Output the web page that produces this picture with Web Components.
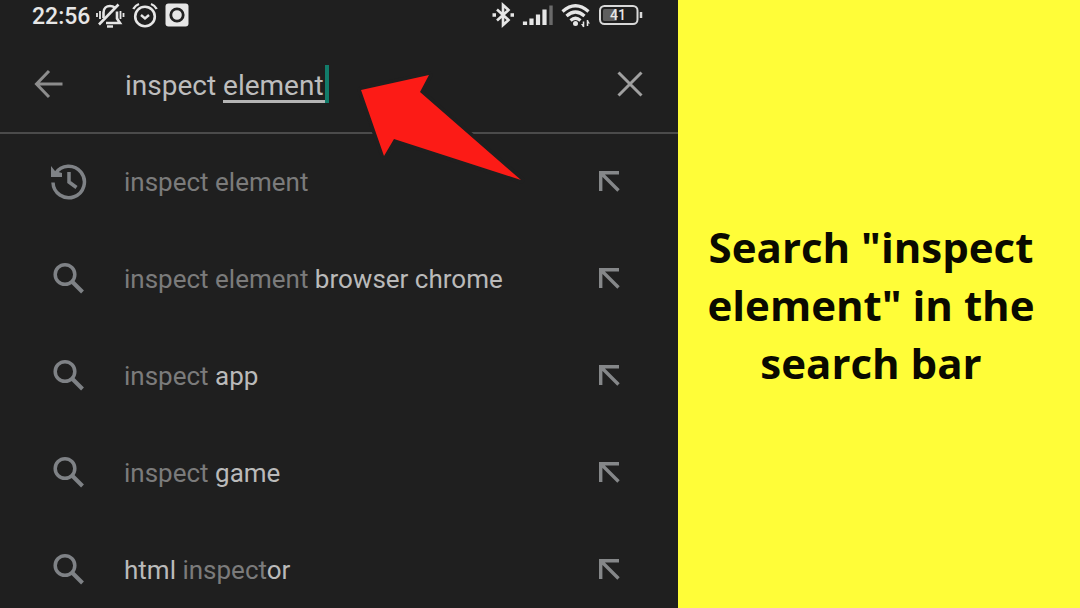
<!DOCTYPE html>
<html lang="en">
<head>
<meta charset="utf-8">
<meta name="viewport" content="width=device-width, initial-scale=1">
<title>Search "inspect element"</title>
<style>
  html, body { margin: 0; height: 100%; }
  body { background: #1f1f1f; font-family: Roboto, "Liberation Sans", sans-serif; }
</style>
</head>
<body>
<tutorial-slide>
  <phone-screen slot="screen">
    <status-bar slot="top" level="41">22:56</status-bar>
    <search-header slot="top" value="inspect element"></search-header>
    <suggestion-row kind="history">inspect element</suggestion-row>
    <suggestion-row>inspect element <b>browser chrome</b></suggestion-row>
    <suggestion-row>inspect <b>app</b></suggestion-row>
    <suggestion-row>inspect <b>game</b></suggestion-row>
    <suggestion-row><b>html</b> inspect<b>or</b></suggestion-row>
  </phone-screen>
  <slide-caption slot="caption">Search "inspect element" in the search bar</slide-caption>
</tutorial-slide>

<script>
const define = (name, render) => customElements.define(name, class extends HTMLElement {
  constructor() {
    super();
    this.attachShadow({ mode: 'open' });
  }
  connectedCallback() {
    this.shadowRoot.innerHTML = render(this);
  }
});

define('tutorial-slide', () => `
  <style>
    :host { display: grid; grid-template-columns: 339fr 201fr; height: 100vh; overflow: hidden; }
    ::slotted(*) { min-width: 0; }
  </style>
  <slot name="screen"></slot>
  <slot name="caption"></slot>`);

define('slide-caption', () => `
  <style>
    :host { display: flex; align-items: center; justify-content: center; background: #fffd38; color: #0a0a00;
            padding: 2px 40px 0 24px; box-sizing: border-box; }
    p { margin: 0; font: 700 42px/58px "Open Sans", "Noto Sans", sans-serif; text-align: center; }
  </style>
  <p><slot></slot></p>`);

define('phone-screen', () => `
  <style>
    :host { display: flex; flex-direction: column; position: relative; overflow: hidden; background: #1f1f1f; }
    main { display: flex; flex-direction: column; }
    pointer-arrow { position: absolute; left: 352px; top: 66px; }
  </style>
  <slot name="top"></slot>
  <main><slot></slot></main>
  <pointer-arrow></pointer-arrow>`);

define('pointer-arrow', () => `
  <style>
    :host { display: block; pointer-events: none; }
    svg { display: block; }
  </style>
  <svg width="180" height="124" viewBox="352 66 180 124" aria-hidden="true">
    <path d="M361 90L429 75L420 92L521 180L394 139L384 156Z" fill="#fc1b16" stroke="#1f1f1f" stroke-width="7" stroke-linejoin="round" paint-order="stroke"/>
  </svg>`);

define('status-bar', el => `
  <style>
    :host { display: flex; align-items: center; justify-content: space-between; box-sizing: border-box; height: 36px; flex: none;
            padding: 0 35px 6px 32px; color: #e6e6e6; }
    div { display: flex; align-items: center; gap: 8px; }
    time { font-size: 23px; line-height: 26px; font-weight: 500; padding-top: 4px; }
    .left { gap: 6px; }
    svg { display: block; overflow: visible; }
    text { font: 500 14px Roboto, sans-serif; }
  </style>
  <div class="left">
    <time><slot></slot></time>
    <svg width="30" height="26" viewBox="0 0 30 26" fill="none" stroke="currentColor" stroke-width="2.600" aria-label="Silent">
      <path d="M7.500 16V10.500C7.500 6.500 10.500 4 14 4C16 4 17.500 4.500 18.500 5.500M21 9.500V16.500L24 21H10"/>
      <path d="M3 22.500L22.500 2.500" stroke-width="2.600"/>
      <path d="M11 24.500H17" stroke-width="2.400"/>
      <path d="M4 9V17M1 11V15M24.500 9V17M27.500 11V15" stroke-width="1.800"/>
    </svg>
    <svg width="27" height="26" viewBox="0 0 27 26" fill="none" stroke="currentColor" stroke-width="2.600" aria-label="Alarm">
      <circle cx="13" cy="14.500" r="9.800"/>
      <path d="M9 13L13 16.500L17 13" stroke-width="2.400"/>
      <path d="M1.300 7Q3 3.500 7 2M24.700 7Q23 3.500 19 2" stroke-width="2.400"/>
    </svg>
    <svg width="26" height="26" viewBox="0 0 26 26" aria-label="Recording">
      <rect x="0.500" y="1.500" width="23" height="23" rx="3" fill="currentColor"/>
      <circle cx="12" cy="13" r="6.200" fill="#e6e6e6" stroke="#222" stroke-width="2.800"/>
    </svg>
  </div>
  <div>
    <svg width="23" height="26" viewBox="0 0 23 26" fill="none" stroke="currentColor" stroke-width="2.600" aria-label="Bluetooth">
      <path d="M5 7.500L16.500 18L11 23V3L16.500 8L5 18.500"/>
      <path d="M0.500 13h3.500M18.500 13h3.500" stroke-width="3.400"/>
    </svg>
    <svg width="30" height="26" viewBox="0 0 30 26" stroke="currentColor" stroke-width="4.200" aria-label="Signal">
      <path d="M2 23V19.500M8.500 23V16.500M15 23V12.500M21.500 23V7.500"/><path d="M28 23V3.500" stroke="#6a6a6a" stroke-width="3.400"/>
    </svg>
    <svg width="30" height="26" viewBox="0 0 30 26" fill="none" stroke="currentColor" stroke-width="3.200" aria-label="Wi-Fi">
      <path d="M1.500 9.500Q14.500 -2 27.500 9.500M5.500 14Q14.500 6 23.500 14M9.500 18.500Q14.500 14 19.500 18.500"/>
      <circle cx="14.500" cy="21.500" r="2.500" fill="currentColor" stroke="none"/>
      <path d="M22.500 25V19.500M26.500 18V24" stroke-width="1.500"/>
      <path d="M20 22h2.500v3.500zM29 21.500h-2.500V18z" fill="currentColor" stroke="none"/>
    </svg>
    <svg width="44" height="26" viewBox="0 0 44 26" fill="none" aria-label="Battery">
      <rect x="1" y="4" width="37.500" height="18" rx="4.500" stroke="#d8d8d8" stroke-width="2"/>
      <rect x="4" y="7" width="14" height="12" rx="1.500" fill="#5e5e5e"/>
      <path d="M42 10v6" stroke="#d8d8d8" stroke-width="2.500"/>
      <text x="19" y="18" text-anchor="middle" fill="#e6e6e6">${el.getAttribute('level')}</text>
    </svg>
  </div>`);

define('search-header', el => `
  <style>
    :host { display: block; border-bottom: 2px solid #4b4b4b; flex: none; }
    form { display: flex; align-items: center; box-sizing: border-box; height: 96px; padding: 0 34px; margin: 0; }
    button { display: block; flex: none; border: 0; padding: 0; background: none; color: #8c8c8c; cursor: pointer; }
    button[type=reset] { color: #a0a0a0; }
    svg { display: block; }
    .field { display: flex; align-items: center; flex: 1; margin-left: 60px; min-width: 0; }
    input { field-sizing: content; border: 0; margin: 0; padding: 2px 1px 0; outline: 0; color: #bdbdbd; height: 38px; box-sizing: border-box;
            font: 28px/36px Roboto, "Liberation Sans", sans-serif;
            background: linear-gradient(#b5b5b5, #b5b5b5) right bottom / 102px 3px no-repeat; }
    .caret { width: 4px; height: 38px; background: #127c6a; }
  </style>
  <form>
    <button type="button" aria-label="Back">
      <svg width="30" height="30" viewBox="0 0 30 30" fill="none" stroke="currentColor" stroke-width="3">
        <path d="M28.500 15H3M15 2L2.500 15L15 28"/>
      </svg>
    </button>
    <label class="field">
      <input type="text" aria-label="Search" spellcheck="false" value="${el.getAttribute('value')}"><span class="caret"></span>
    </label>
    <button type="reset" aria-label="Clear">
      <svg width="28" height="28" viewBox="0 0 28 28" fill="none" stroke="currentColor" stroke-width="3">
        <path d="M2.500 2.500L25.500 25.500M25.500 2.500L2.500 25.500"/>
      </svg>
    </button>
  </form>`);

const leading = {
  history: `<path d="M5.500 11.500A15.700 15.700 0 1 1 3 20.500"/><path d="M1 4L5 9L12 11V15H1Z" fill="currentColor" stroke="none"/><path d="M19 10V20L26.500 25.500"/>`,
  search: `<circle cx="15" cy="15.500" r="9.800"/><path d="M22 22.500L32.500 33" stroke-width="4"/>`
};

define('suggestion-row', el => `
  <style>
    :host { display: flex; align-items: center; box-sizing: border-box; height: 97px; padding: 0 58px 4px 50px; flex: none; }
    a { display: flex; align-items: center; gap: 36px; flex: 1; color: #7b7b7b; text-decoration: none;
        font-size: 26px; line-height: 32px; white-space: nowrap; }
    span { padding-top: 2px; }
    ::slotted(b) { font-weight: 400; color: #bababa; }
    svg { display: block; flex: none; }
    button { border: 0; padding: 0; background: none; color: #858789; cursor: pointer; }
    .lead { color: #7f8286; }
  </style>
  <a href="#">
    <svg class="lead" width="38" height="38" viewBox="0 0 38 38" fill="none" stroke="currentColor" stroke-width="3.500" aria-hidden="true">${leading[el.getAttribute('kind') || 'search']}</svg>
    <span><slot></slot></span>
  </a>
  <button type="button" aria-label="Use suggestion">
    <svg width="22" height="22" viewBox="0 0 22 22" fill="none" stroke="currentColor" stroke-width="3.400">
      <path d="M2.700 21V2.700H21M2.700 2.700L20.500 20.500"/>
    </svg>
  </button>`);
</script>
</body>
</html>
